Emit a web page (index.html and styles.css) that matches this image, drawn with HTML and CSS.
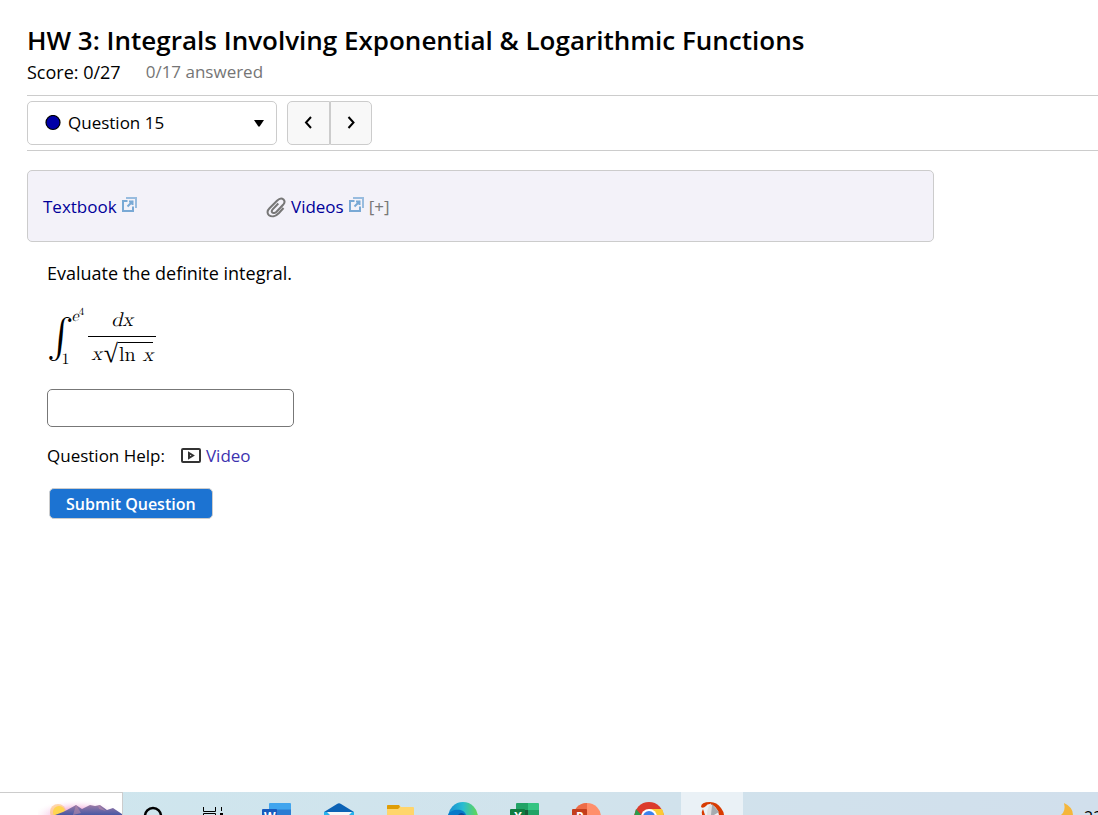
FILE: index.html
```html
<!DOCTYPE html>
<html lang="en">
<head>
  <meta charset="UTF-8" />
  <title>HW 3: Integrals Involving Exponential &amp; Logarithmic Functions</title>
  <link rel="stylesheet" href="styles.css">
</head>
<body>

  <main class="assess">
    <header class="assess-header">
      <h1>HW 3: Integrals Involving Exponential &amp; Logarithmic Functions</h1>
      <div class="score-row">
        <span class="score">Score: 0/27</span>
        <span class="answered">0/17 answered</span>
      </div>
    </header>

    <nav class="question-nav" aria-label="Question navigation">
      <div class="question-picker">
        <svg class="dot" width="16" height="16" viewBox="0 0 16 16" aria-hidden="true"><circle cx="8" cy="7.5" r="7" fill="#0000a8" stroke="#000" stroke-width="1.2"/></svg>
        <select id="question" aria-label="Question">
          <option>Question 15</option>
        </select>
        <svg class="caret" width="10" height="7" viewBox="0 0 10 7" aria-hidden="true"><path d="M0 0h10L5.8 6.2q-.8.9-1.6 0z"/></svg>
      </div>
      <div class="step-buttons">
        <button type="button" aria-label="Previous question"><svg width="10" height="14" viewBox="0 0 10 14"><path d="M7 1 2 6.500l5 5.500"/></svg></button>
        <button type="button" aria-label="Next question"><svg width="10" height="14" viewBox="0 0 10 14"><path d="m2.500 1 5 5.500-5 5.500"/></svg></button>
      </div>
    </nav>

    <section class="resources">
      <div class="resource">
        <a href="#textbook">Textbook</a>
        <svg class="external" width="15" height="15" viewBox="0 0 15 15" aria-hidden="true"><path d="M5.500 4H1v10h10V9.500"/><path d="M4 1h10v10" opacity=".75"/><path d="M11 4 5.500 9.500M7 4.500h3.500V8"/></svg>
      </div>
      <div class="resource">
        <svg class="clip" width="20" height="22" viewBox="0 0 20 22" aria-hidden="true"><path d="m17.500 12-4.500 5c-3.500 3.700-7.500 4.200-10 2.200-2.200-2-1.800-4.700.5-7l7.500-7.500c2.200-2.200 4.800-2.700 6.500-1.200 1.500 1.500 1.200 3.500-.4 5.300l-6.600 7c-1.400 1.400-3.300 1.700-4.200.8-.9-.9-.5-2.300.6-3.500l5.400-5.600"/></svg>
        <a href="#videos">Videos</a>
        <svg class="external" width="15" height="15" viewBox="0 0 15 15" aria-hidden="true"><path d="M5.500 4H1v10h10V9.500"/><path d="M4 1h10v10" opacity=".75"/><path d="M11 4 5.500 9.500M7 4.500h3.500V8"/></svg>
        <button type="button" class="expand" aria-label="Show more videos">[+]</button>
      </div>
    </section>

    <form class="question">
      <label for="answer">Evaluate the definite integral.</label>

      <div class="integral" role="math" aria-label="integral from 1 to e to the 4 of dx over x times the square root of ln x">
        <span class="int-sign">∫</span>
        <span class="limits">
          <span class="upper"><i>e</i><sup>4</sup></span>
          <span>1</span>
        </span>
        <span class="fraction">
          <span class="numerator"><i>dx</i></span>
          <span class="denominator"><i>x</i><span class="radical">√</span><span class="radicand">ln <i>x</i></span></span>
        </span>
      </div>

      <input type="text" id="answer" class="answer" autocomplete="off">

      <div class="help">
        <span>Question Help:</span>
        <a href="#video"><svg width="20" height="16" viewBox="0 0 20 16" aria-hidden="true"><rect x="1" y="1" width="18" height="13" rx="1"/><path d="M8 5v5l4-2.500z"/></svg>Video</a>
      </div>

      <button type="submit" class="submit">Submit Question</button>
    </form>
  </main>

  <footer class="taskbar">
    <div class="search-box">
      <svg width="84" height="22" viewBox="0 0 84 22" aria-hidden="true">
        <defs>
          <radialGradient id="glow" cx=".45" cy=".6" r=".5">
            <stop offset="0" stop-color="#f07fbb"/>
            <stop offset=".5" stop-color="#f3b4dc" stop-opacity=".8"/>
            <stop offset="1" stop-color="#fff" stop-opacity="0"/>
          </radialGradient>
          <linearGradient id="hills" x2="0" y2="1">
            <stop offset="0" stop-color="#9c7ba6"/>
            <stop offset="1" stop-color="#4858a4"/>
          </linearGradient>
        </defs>
        <ellipse cx="44" cy="20" rx="46" ry="17" fill="url(#glow)"/>
        <circle cx="20" cy="19" r="8" fill="#ffb65c" opacity=".5"/>
        <circle cx="21" cy="19" r="6" fill="#ffd54f"/>
        <path d="m17 22 8-3 4-2 9-5 6 4 8-4 5 1 5-1 7 5 6-2 9 6v1z" fill="url(#hills)"/>
        <path d="m38 12 5 8-8 2zM60 12l8 6-7-2z" fill="#b78aaa" opacity=".6"/>
      </svg>
    </div>
    <div class="apps">
      <span class="app"><svg width="30" height="23" viewBox="0 0 30 23"><circle cx="15" cy="24" r="8" fill="none" stroke="#000" stroke-width="2.500"/></svg></span>
      <span class="app"><svg width="30" height="23" viewBox="0 0 30 23"><path d="M3.500 15v4.500h12V15M3.500 23v-1.500h12V23M21.500 15v4" fill="none" stroke="#000"/><path d="M20 21h3v2h-3z"/></svg></span>
      <span class="app"><svg width="30" height="23" viewBox="0 0 30 23"><path d="M7 18v-6q0-1 1-1h20q1 0 1 1v6z" fill="#41a5ee"/><path d="M7 17.500h22V23H7z" fill="#2b7cd3"/><rect y="17" width="15" height="10" rx="1" fill="#185abd"/><text x="2" y="29" class="app-letter">W</text></svg></span>
      <span class="app"><svg width="30" height="23" viewBox="0 0 30 23"><path d="m0 20 13-8q2-1.500 4 0l13 8v3H0z" fill="#0b62b5"/><path d="M0 20h30v3H0z" fill="#27b3ed"/><path d="M3 20h25l-3 3H6z" fill="#f7f8f8"/></svg></span>
      <span class="app"><svg width="30" height="23" viewBox="0 0 30 23"><path d="M1 14q0-1 1-1h11l2 2h12q1 0 1 1v7H1z" fill="#ffd56b"/><path d="M1 17v-3q0-1 1-1h11l1 2-2 2z" fill="#df9d05"/></svg></span>
      <span class="app"><svg width="30" height="23" viewBox="0 0 30 23"><defs><linearGradient id="edge"><stop offset="0" stop-color="#168bd2"/><stop offset=".5" stop-color="#29bcd1"/><stop offset="1" stop-color="#65d84f"/></linearGradient></defs><circle cx="15" cy="25" r="15" fill="url(#edge)"/><path d="M0 23c2-6 16-8 18 0z" fill="#0879c9"/><path d="M10 23q3-4 7 0z" fill="#0b4e9b"/></svg></span>
      <span class="app"><svg width="30" height="23" viewBox="0 0 30 23"><path d="M6 12q0-1 1-1h11v12H6z" fill="#21a366"/><path d="M18 11h10q1 0 1 1v6H18z" fill="#33c481"/><path d="M7 18h11v5H7z" fill="#185c37"/><path d="M18 18h11v5H18z" fill="#21a366"/><rect y="17" width="15" height="10" rx="1" fill="#107c41"/><text x="4" y="29" class="app-letter">X</text></svg></span>
      <span class="app"><svg width="30" height="23" viewBox="0 0 30 23"><circle cx="15" cy="25" r="14" fill="#ff8f6b"/><path d="M1 25a14 14 0 0 1 14-14v14z" fill="#ed6c47"/><rect y="17" width="15" height="10" rx="1" fill="#c43e1c"/><text x="4" y="29" class="app-letter">P</text></svg></span>
      <span class="app"><svg width="30" height="23" viewBox="0 0 30 23"><circle cx="15" cy="25" r="15" fill="#db3b2c"/><path d="m0 25 2-8 7 8z" fill="#2c9c4b"/><path d="M15 17h13q2 4 2 8H15z" fill="#fcc934"/><circle cx="15" cy="25" r="8" fill="#fff"/><circle cx="15" cy="25" r="6" fill="#3b82ee"/></svg></span>
      <span class="app active"><svg width="30" height="23" viewBox="0 0 30 23"><path d="M5 15q0-5 9-5 7 0 11 6 3 4 3 7h-5q-1-6-5-9l-4-2q-3 0-4 2-3 3-5 1" fill="#d83b01"/><path d="m7 17 2 6H6q-1-3 1-6" fill="#d83b01"/><path d="m15 11 1 12h-5q0-7 4-12" fill="#e0e0e0"/><path d="m16 12 7 8-5 3h-3z" fill="#a7abb0"/></svg></span>
    </div>
    <div class="tray">
      <svg width="14" height="23" viewBox="0 0 14 23" aria-hidden="true"><path d="M4 11q9 4 9 12H1q5-4 3-12" fill="#f5b63b"/></svg>
      <span class="clock">22</span>
    </div>
  </footer>

</body>
</html>
```

FILE: styles.css
```css
* {
  box-sizing: border-box;
}

body {
  margin: 0;
  min-height: 100vh;
  display: flex;
  flex-direction: column;
  background: #fff;
  color: #000;
  font-family: "Trebuchet MS", "Open Sans", sans-serif;
  font-size: 17px;
  line-height: 24px;
}

button, input, select {
  font: inherit;
  color: inherit;
}

svg {
  display: block;
  flex: none;
}

a {
  color: #000099;
  text-decoration: none;
}

.assess {
  flex: 1;
  padding: 23px 0 24px 27px;
}

/* title and score */
h1 {
  margin: 0;
  font-size: 26px;
  font-weight: 600;
  line-height: 34px;
}

.score-row {
  display: flex;
  gap: 25px;
  margin: 3px 0 11px;
}

.score,
.question label {
  font-size: 18px;
}

.answered {
  color: #757575;
}

/* question navigation */
.question-nav {
  display: flex;
  gap: 10px;
  padding: 5px 0;
  border-top: 1px solid #ccc;
  border-bottom: 1px solid #ccc;
}

.question-picker {
  display: flex;
  align-items: center;
  gap: 7px;
  width: 250px;
  height: 44px;
  padding: 0 12px 0 17px;
  border: 1px solid #ccc;
  border-radius: 5px;
}

.question-picker select {
  flex: 1;
  min-width: 0;
  padding: 0;
  border: 0;
  background: transparent;
  appearance: none;
}

.step-buttons {
  display: flex;
}

.step-buttons button {
  display: flex;
  align-items: center;
  justify-content: center;
  width: 43px;
  height: 44px;
  padding: 0;
  border: 1px solid #ccc;
  background: #f8f8f8;
}

.step-buttons button:first-child {
  border-radius: 5px 0 0 5px;
}

.step-buttons button:last-child {
  width: 42px;
  border-radius: 0 5px 5px 0;
}

.step-buttons path {
  fill: none;
  stroke: #000;
  stroke-width: 2;
}

/* textbook and video links */
.resources {
  display: grid;
  grid-template-columns: 223px 1fr;
  align-items: center;
  max-width: 907px;
  height: 72px;
  margin: 19px 20px 0 0;
  padding: 2px 15px 0;
  border: 1px solid #ccc;
  border-radius: 5px;
  background: #f3f2f9;
}

.resource {
  display: flex;
  align-items: center;
  gap: 5px;
}

.external {
  margin-bottom: 6px;
  fill: none;
  stroke: #79a9d5;
  stroke-width: 2;
}

.clip {
  fill: none;
  stroke: #777;
  stroke-width: 2;
}

.expand {
  padding: 0;
  border: 0;
  background: none;
  color: #777;
}

/* question body */
.question {
  display: flex;
  flex-direction: column;
  align-items: flex-start;
  padding: 19px 20px;
}

.integral {
  display: flex;
  align-items: center;
  height: 66px;
  margin: 19px 0;
  font-family: "Latin Modern Math", "DejaVu Math TeX Gyre", "Liberation Serif", serif;
  font-size: 20px;
  line-height: 24px;
}

/* the limits tuck in against the slanted sign */
.int-sign {
  margin-right: -12px;
  font-size: 40px;
  line-height: 56px;
}

.limits {
  display: flex;
  flex-direction: column;
  justify-content: space-between;
  height: 62px;
  font-size: 16px;
  line-height: 18px;
}

.upper {
  padding-left: 10px;
}

.limits sup {
  font-size: 11px;
  line-height: 1;
}

.fraction {
  display: flex;
  flex-direction: column;
  align-items: center;
  margin-left: 4px;
}

.numerator {
  padding-bottom: 4px;
}

.denominator {
  display: flex;
  padding: 5px 3px 0;
  border-top: 1px solid #000;
}

.radical {
  padding-left: 2px;
  font-family: "Liberation Serif", serif;
  font-size: 26px;
}

.radicand {
  padding-left: 1px;
  border-top: 1px solid #000;
}

.answer {
  width: 247px;
  height: 38px;
  padding: 0 8px;
  border: 1px solid #777;
  border-radius: 5px;
  background: #fff;
}

.help {
  display: flex;
  gap: 16px;
  margin-top: 17px;
}

.help a {
  display: flex;
  align-items: center;
  gap: 5px;
  color: #3c32af;
}

.help rect,
.help path {
  fill: none;
  stroke: #333;
  stroke-width: 2;
}

.submit {
  height: 31px;
  margin: 20px 2px 0;
  padding: 0 16px;
  border: 1px solid #ccc;
  border-radius: 5px;
  background: #1c73d2;
  color: #fff;
  font-size: 16px;
  font-weight: 600;
  line-height: 28px;
}

/* taskbar strip along the bottom edge */
.taskbar {
  display: flex;
  height: 23px;
  overflow: hidden;
  background: linear-gradient(90deg, #cee6ee, #d1e3ec 50%, #d1dfec);
}

.search-box {
  display: flex;
  flex: none;
  justify-content: flex-end;
  width: 123px;
  border-top: 1px solid #ccc;
  border-right: 1px solid #ccc;
  background: #fff;
}

.apps {
  display: flex;
}

.app {
  display: flex;
  justify-content: center;
  width: 62px;
  padding-right: 2px;
}

.app.active {
  background: #eaf1f6;
}

.app-letter {
  fill: #fff;
  font: bold 12px "Open Sans", sans-serif;
}

.tray {
  display: flex;
  gap: 10px;
  margin-left: auto;
}

.clock {
  width: 14px;
  padding-top: 15px;
  overflow: hidden;
  font-size: 16px;
  line-height: 20px;
}
```
